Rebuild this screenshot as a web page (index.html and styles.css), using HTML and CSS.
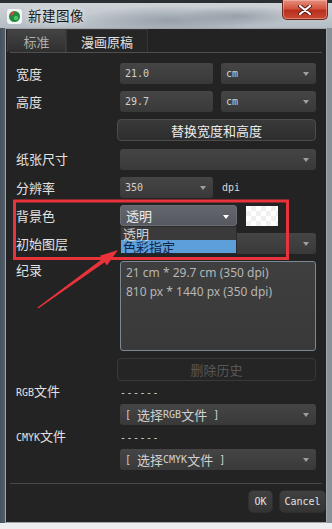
FILE: index.html
```html
<!DOCTYPE html>
<html lang="zh-CN">
<head>
    <meta charset="UTF-8">
    <meta name="viewport" content="width=device-width, initial-scale=1.0">
    <title>新建图像</title>
    <link rel="stylesheet" href="styles.css">
</head>
<body>
    <div class="window">
        <header class="titlebar">
            <svg class="app-icon" viewBox="0 0 15 15" width="15" height="15">
                <rect x="0" y="0" width="15" height="15" rx="3" fill="#f4f4f4"/>
                <circle cx="7.5" cy="7.5" r="5.5" fill="#1f8a3c"/>
                <path d="M3 6.5 A5 5 0 0 1 7.5 2.2 L7 5.5 Z" fill="#d9443a"/>
                <circle cx="9" cy="9" r="2.2" fill="#4cc46a"/>
            </svg>
            <span class="title">新建图像</span>
            <button class="close">
                <svg viewBox="0 0 14 10" width="14" height="10">
                    <path d="M2 1 L12 9 M12 1 L2 9" stroke="#5a1a12" stroke-width="4" stroke-linecap="round"/>
                    <path d="M2 1 L12 9 M12 1 L2 9" stroke="#ffffff" stroke-width="2.2" stroke-linecap="round"/>
                </svg>
            </button>
        </header>

        <div class="panel">
            <div class="tabs">
                <div class="tab first">标准</div>
                <div class="tab">漫画原稿</div>
            </div>
            <div class="tabline"></div>

            <div class="form">
                <div class="row">
                    <label>宽度</label>
                    <div class="field">
                        <div class="box mono w93">21.0</div>
                        <div class="box select mono grow gap8">cm</div>
                    </div>
                </div>
                <div class="row">
                    <label>高度</label>
                    <div class="field">
                        <div class="box mono w93">29.7</div>
                        <div class="box select mono grow gap8">cm</div>
                    </div>
                </div>
                <div class="row tall">
                    <label></label>
                    <div class="field">
                        <button class="btn">替换宽度和高度</button>
                    </div>
                </div>
                <div class="row tall">
                    <label>纸张尺寸</label>
                    <div class="field">
                        <div class="box select grow"></div>
                    </div>
                </div>
                <div class="row">
                    <label>分辨率</label>
                    <div class="field">
                        <div class="box select mono w93">350</div>
                        <span class="unit mono">dpi</span>
                    </div>
                </div>
                <div class="row">
                    <label>背景色</label>
                    <div class="field">
                        <div class="combo">
                            <div class="box select light">透明</div>
                            <div class="dropdown">
                                <div class="opt">透明</div>
                                <div class="opt picked">色彩指定</div>
                            </div>
                        </div>
                        <div class="swatch"></div>
                    </div>
                </div>
                <div class="row">
                    <label>初始图层</label>
                    <div class="field">
                        <div class="box select grow"></div>
                    </div>
                </div>
                <div class="row record-row">
                    <label>纪录</label>
                    <div class="field">
                        <div class="record">
                            <div>21 cm * 29.7 cm (350 dpi)</div>
                            <div>810 px * 1440 px (350 dpi)</div>
                        </div>
                    </div>
                </div>
                <div class="row tall">
                    <label></label>
                    <div class="field">
                        <button class="btn disabled">删除历史</button>
                    </div>
                </div>

                <div class="files">
                    <div class="row small">
                        <label><span class="mono">RGB</span>文件</label>
                        <div class="field"><span class="mono dash">------</span></div>
                    </div>
                    <div class="row">
                        <label></label>
                        <div class="field">
                            <div class="box select grow file"><span class="mono">[&nbsp;</span>选择<span class="mono">RGB</span>文件<span class="mono">&nbsp;]</span></div>
                        </div>
                    </div>
                    <div class="row small">
                        <label><span class="mono">CMYK</span>文件</label>
                        <div class="field"><span class="mono dash">------</span></div>
                    </div>
                    <div class="row">
                        <label></label>
                        <div class="field">
                            <div class="box select grow file"><span class="mono">[&nbsp;</span>选择<span class="mono">CMYK</span>文件<span class="mono">&nbsp;]</span></div>
                        </div>
                    </div>
                </div>
            </div>

            <div class="sep"></div>
            <div class="footer">
                <button class="fbtn ok">OK</button>
                <button class="fbtn cancel">Cancel</button>
            </div>
        </div>

        <!-- annotation drawn over the dialog -->
        <svg class="annotation" viewBox="0 0 332 529" width="332" height="529">
            <rect x="14.5" y="201" width="273" height="57.5" fill="none" stroke="#e8333b" stroke-width="3"/>
            <polygon points="118,250 106.9,265.5 104.6,262.2 38.3,308.6 37.5,307.4 102.2,259 99.9,255.7" fill="#e8333b"/>
        </svg>
    </div>
</body>
</html>
```

FILE: styles.css
```css
* { box-sizing: border-box; }
body { margin: 0; background: #eceef0; font-family: "Noto Sans CJK SC", sans-serif; }

.window { position: relative; width: 332px; height: 523px; display: flex; flex-direction: column;
    background: linear-gradient(to right, #46525e 0, #525e6a 5px, #6a747e 5px, #6a747e 327px, #88929a 327px); }

.titlebar { height: 28px; display: flex; align-items: flex-start; padding-left: 7px;
    background: radial-gradient(ellipse 90px 14px at 170px 20px, rgba(120, 130, 140, 0.55), rgba(120, 130, 140, 0)),
                radial-gradient(ellipse 60px 10px at 240px 16px, rgba(110, 120, 130, 0.45), rgba(110, 120, 130, 0)),
                linear-gradient(#2a2f35 0, #2a2f35 3px, #cdd2d7 3px, #c2c9cf 16px, #b4bcc3 28px); }
.app-icon { margin-top: 9px; flex: none; }
.title { margin: 7px 0 0 6px; font-size: 13.5px; line-height: 17px; color: #15181b; letter-spacing: 0.5px;
    text-shadow: 0 0 6px rgba(255, 255, 255, 0.9); }
.close { margin-left: auto; margin-right: 4px; width: 46px; height: 20px; padding: 0; display: flex; align-items: center; justify-content: center;
    border: 1px solid #6a2a22; border-top: none; border-radius: 0 0 5px 5px;
    background: linear-gradient(#e6907f 0, #d2543f 45%, #b8301e 55%, #c84a32 100%);
    box-shadow: inset 0 0 0 1px rgba(255, 200, 190, 0.45); }

.panel { width: 322px; height: 495px; margin-left: 5px; background: #232323; border: 1px solid #a2a6aa;
    display: flex; flex-direction: column; }

.tabs { display: flex; height: 23px; padding-left: 1px; }
.tab { display: flex; align-items: center; justify-content: center; font-size: 13px; color: #e0e0e0;
    width: 82px; background: #262626; border: 1px solid #363636; border-bottom: none; }
.tab.first { width: 59px; color: #b0b0b0; background: linear-gradient(#444444, #2f2f2f); border-color: #3e3e3e; }
.tabline { height: 1px; margin: 0 4px; background: #4e4e4e; }

.form { display: flex; flex-direction: column; gap: 7px; padding: 10px 10px 0 10px; }
.row { display: flex; align-items: center; height: 21px; }
.row.tall { height: 22px; }
.row.small { height: 14px; }
.row label { width: 104px; flex: none; font-size: 13px; line-height: 16px; color: #e2e2e2; }
.field { flex: 1; display: flex; align-items: center; height: 100%; }

.mono { font-family: "DejaVu Sans Mono", monospace; font-size: 10px; }

.box { position: relative; height: 21px; display: flex; align-items: center; padding-left: 5px;
    color: #d0d0d0; background: linear-gradient(#454545, #393939); border-radius: 3px; }
.select::after { content: ""; position: absolute; right: 7px; top: 9px;
    border-left: 3.5px solid transparent; border-right: 3.5px solid transparent; border-top: 4px solid #a0a0a0; }
.w93 { width: 93px; flex: none; }
.grow { flex: 1; }
.gap8 { margin-left: 8px; }
.unit { margin-left: 9px; color: #d8d8d8; }

.combo { position: relative; width: 117px; flex: none; }
.box.light { font-size: 13px; color: #ececec; background: linear-gradient(#64666e, #575960); border: 1px solid #6c6e76; }
.box.light::after { border-top-color: #ffffff; }
.dropdown { position: absolute; left: 0; top: 21px; width: 117px; z-index: 2; border: 1px solid #2a2a2a; }
.opt { height: 13px; line-height: 13px; font-size: 13px; padding-left: 2px; color: #d6d6d6; background: #3a3a3a; }
.opt.picked { color: #12244a; background: #5d9fd8; }
.swatch { width: 32px; height: 20px; margin-left: 9px; background-color: #ffffff;
    background-image: conic-gradient(#f0f0f0 25%, #ffffff 0 50%, #f0f0f0 0 75%, #ffffff 0);
    background-size: 10px 10px; }

.btn { width: 199px; height: 22px; margin-left: -3px; padding: 0; font-family: "Noto Sans CJK SC", sans-serif; font-size: 13px;
    color: #ebebeb; background: linear-gradient(#3a3a3a, #2d2d2d); border: 1px solid #4c4c4c; border-radius: 4px; }
.btn.disabled { height: 23px; color: #575757; background: #252525; border-color: #393939; }

.record-row { height: 90px; align-items: flex-start; }
.record-row label { padding-top: 1px; }
.record { width: 100%; height: 90px; padding: 1px 5px; border: 1px solid #7c8994; border-radius: 3px;
    background: linear-gradient(#3f3f3f, #393939); color: #b6b6b6; font-family: "Noto Sans", sans-serif; font-size: 12px; line-height: 19px; }

.files { display: flex; flex-direction: column; gap: 5px; margin-top: -2px; }
.dash { color: #d4d4d4; letter-spacing: 0.5px; }
.file { font-size: 13px; color: #d0d0d0; }

.sep { height: 1px; margin: auto 4px 0 4px; background: #4a4a4a; }
.footer { display: flex; justify-content: flex-end; gap: 6px; padding: 6px 0 9px 0; }
.fbtn { height: 23px; padding: 0; font-family: "DejaVu Sans Mono", monospace; font-size: 10px; color: #e2e2e2;
    background: linear-gradient(#404040, #343434); border: 1px solid #2e2e2e; border-radius: 5px; }
.fbtn.ok { width: 25px; }
.fbtn.cancel { width: 47px; }

.annotation { position: absolute; left: 0; top: 0; pointer-events: none; z-index: 5; }
```
